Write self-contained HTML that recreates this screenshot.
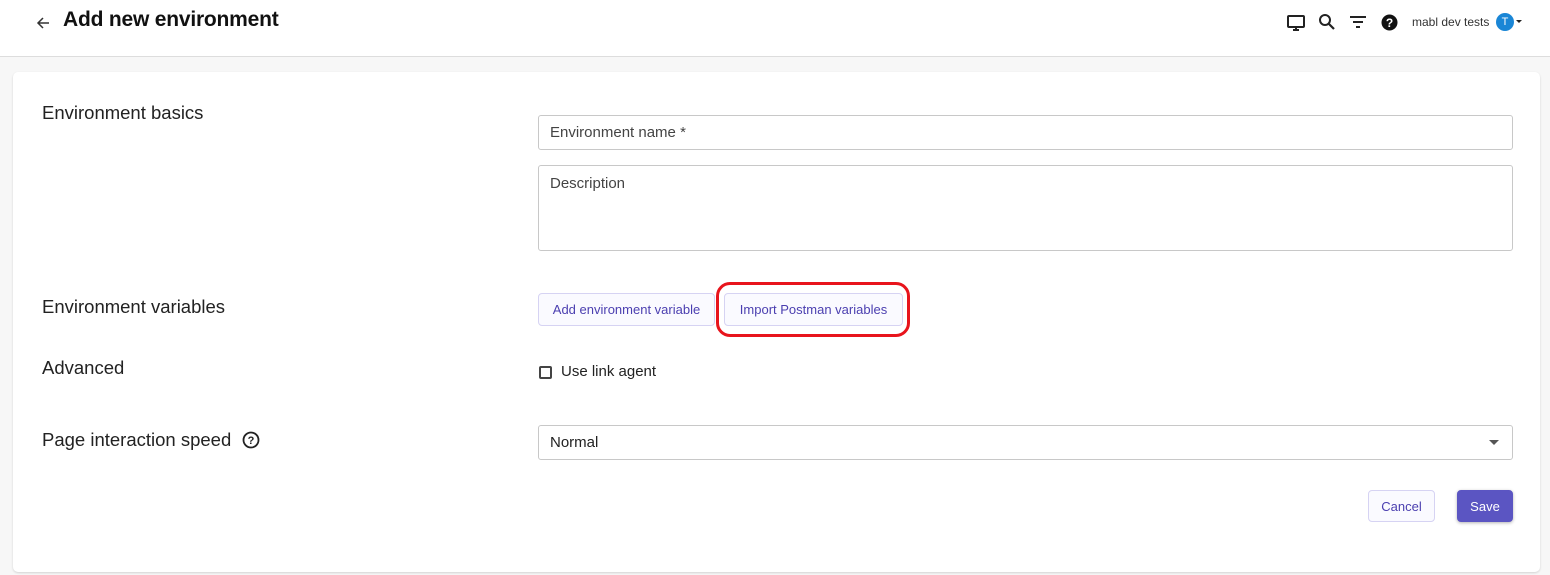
<!DOCTYPE html>
<html><head><style>
*{box-sizing:border-box;margin:0;padding:0}
body{width:1550px;height:575px;background:#f7f7f7;font-family:"Liberation Sans",sans-serif;position:relative;overflow:hidden;color:#222}
.hdr{position:absolute;left:0;top:0;width:1550px;height:57px;background:#fff;border-bottom:1px solid #ddd}
.abs{position:absolute}
.card{position:absolute;left:13px;top:72px;width:1527px;height:500px;background:#fff;border-radius:5px;box-shadow:0 1px 2px rgba(0,0,0,.15)}
.lbl{position:absolute;left:42px;font-size:18.5px;color:#222}
.inp{position:absolute;left:538px;width:975px;border:1px solid #c8c8c8;border-radius:3px;background:#fff;font-size:15px;color:#444;padding-left:11px}
.btn{position:absolute;height:33px;border:1px solid #d6d3f3;border-radius:4px;background:#fafaff;color:#4b3fb0;font-size:13px;display:flex;align-items:center;justify-content:center}
</style></head><body>
<div class="hdr">
 <svg class="abs" style="left:36px;top:16px" width="14" height="14" viewBox="0 0 14 14"><path d="M13 7H2M7 2L2 7l5 5" stroke="#333" stroke-width="1.5" fill="none"/></svg>
 <div class="abs" style="left:63px;top:8px;font-size:21px;font-weight:bold;color:#111;letter-spacing:-0.2px">Add new environment</div>
 <svg class="abs" style="left:1286px;top:13px" width="20" height="20" viewBox="0 0 20 20"><rect x="2" y="3" width="16" height="11" rx="1" stroke="#222" stroke-width="2" fill="none"/><path d="M7 17h6M10 14v3" stroke="#222" stroke-width="2"/></svg>
 <svg class="abs" style="left:1318px;top:13px" width="18" height="18" viewBox="0 0 18 18"><circle cx="7" cy="7" r="5" stroke="#222" stroke-width="2" fill="none"/><path d="M11 11l5 5" stroke="#222" stroke-width="2.2"/></svg>
 <svg class="abs" style="left:1349px;top:14px" width="18" height="16" viewBox="0 0 18 16"><path d="M1 3h16M4 8h10M7 13h4" stroke="#222" stroke-width="2"/></svg>
 <svg class="abs" style="left:1381px;top:14px" width="17" height="17" viewBox="0 0 17 17"><circle cx="8.5" cy="8.5" r="8" fill="#111"/><text x="8.5" y="13" font-size="12" font-weight="bold" fill="#fff" text-anchor="middle" font-family="Liberation Sans">?</text></svg>
 <div class="abs" style="left:1412px;top:15px;font-size:12px;color:#333">mabl dev tests</div>
 <div class="abs" style="left:1496px;top:13px;width:18px;height:18px;border-radius:50%;background:#1a86d6;color:#fff;font-size:11px;text-align:center;line-height:18px">T</div>
 <div class="abs" style="left:1516px;top:20px;border-left:3px solid transparent;border-right:3px solid transparent;border-top:3px solid #222"></div>
</div>
<div class="card"></div>
<div class="lbl" style="top:102px">Environment basics</div>
<div class="inp" style="top:115px;height:35px;line-height:33px">Environment name *</div>
<div class="inp" style="top:165px;height:86px;padding-top:9px">Description</div>
<div class="lbl" style="top:296px">Environment variables</div>
<div class="btn" style="left:538px;top:293px;width:177px">Add environment variable</div>
<div class="btn" style="left:724px;top:293px;width:179px">Import Postman variables</div>
<div class="abs" style="left:716px;top:282px;width:194px;height:55px;border:3px solid #e8141c;border-radius:14px"></div>
<div class="lbl" style="top:357px">Advanced</div>
<div class="abs" style="left:539px;top:366px;width:13px;height:13px;border:2px solid #444;border-radius:2px"></div>
<div class="abs" style="left:561px;top:363px;font-size:15px;color:#222">Use link agent</div>
<div class="lbl" style="top:429px">Page interaction speed</div>
<svg class="abs" style="left:242px;top:431px" width="18" height="18" viewBox="0 0 18 18"><circle cx="9" cy="9" r="7.5" stroke="#222" stroke-width="1.8" fill="none"/><text x="9" y="13" font-size="11" font-weight="bold" fill="#222" text-anchor="middle" font-family="Liberation Sans">?</text></svg>
<div class="inp" style="top:425px;height:35px;line-height:33px;color:#222">Normal</div>
<div class="abs" style="left:1489px;top:440px;border-left:5px solid transparent;border-right:5px solid transparent;border-top:5px solid #555"></div>
<div class="btn" style="left:1368px;top:490px;width:67px;height:32px;font-size:13px">Cancel</div>
<div class="btn" style="left:1457px;top:490px;width:56px;height:32px;background:#5b55c2;border-color:#5b55c2;color:#fff;box-shadow:0 1px 3px rgba(0,0,0,.3)">Save</div>
</body></html>
